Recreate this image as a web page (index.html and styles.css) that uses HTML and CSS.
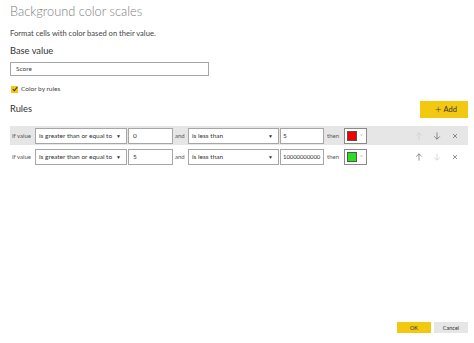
FILE: index.html
```html
<!DOCTYPE html>
<html>
<head>
<meta charset="utf-8">
<link rel="stylesheet" href="styles.css">
</head>
<body>
<div class="dialog">
  <h1 class="title">Background color scales</h1>
  <p class="subtitle">Format cells with color based on their value.</p>
  <h2 class="section">Base value</h2>
  <div class="field">Score</div>
  <label class="check"><span class="box"><svg viewBox="0 0 8 8" width="6" height="6"><path d="M1 4.2 L3.2 6.3 L7 1.6" fill="none" stroke="#333" stroke-width="1.4"/></svg></span>Color by rules</label>
  <div class="rules-head">
    <h2 class="section rules-title">Rules</h2>
    <button class="add"><span class="plus">+</span>Add</button>
  </div>
  <div class="rules">
    <div class="rule active">
      <span class="lbl">If value</span>
      <div class="sel s1"><span>is greater than or equal to</span><span class="caret">▼</span></div>
      <div class="inp i1">0</div>
      <span class="lbl and">and</span>
      <div class="sel s2"><span>is less than</span><span class="caret">▼</span></div>
      <div class="inp i2">5</div>
      <span class="lbl then">then</span>
      <div class="color"><span class="sw red"></span><span class="chev">˅</span></div>
      <div class="acts">
        <svg class="act dim" viewBox="0 0 10 10"><path d="M5 9.5V1 M1.5 4.5L5 1L8.5 4.5" fill="none" stroke="currentColor" stroke-width="0.8"/></svg>
        <svg class="act" viewBox="0 0 10 10"><path d="M5 0.5V9 M1.5 5.5L5 9L8.5 5.5" fill="none" stroke="currentColor" stroke-width="0.8"/></svg>
        <svg class="act" viewBox="0 0 10 10"><path d="M2.5 2.5L7.5 7.5 M7.5 2.5L2.5 7.5" fill="none" stroke="currentColor" stroke-width="0.8"/></svg>
      </div>
    </div>
    <div class="rule">
      <span class="lbl">If value</span>
      <div class="sel s1"><span>is greater than or equal to</span><span class="caret">▼</span></div>
      <div class="inp i1">5</div>
      <span class="lbl and">and</span>
      <div class="sel s2"><span>is less than</span><span class="caret">▼</span></div>
      <div class="inp i2 long">10000000000</div>
      <span class="lbl then">then</span>
      <div class="color"><span class="sw green"></span><span class="chev">˅</span></div>
      <div class="acts">
        <svg class="act" viewBox="0 0 10 10"><path d="M5 9.5V1 M1.5 4.5L5 1L8.5 4.5" fill="none" stroke="currentColor" stroke-width="0.8"/></svg>
        <svg class="act dim" viewBox="0 0 10 10"><path d="M5 0.5V9 M1.5 5.5L5 9L8.5 5.5" fill="none" stroke="currentColor" stroke-width="0.8"/></svg>
        <svg class="act" viewBox="0 0 10 10"><path d="M2.5 2.5L7.5 7.5 M7.5 2.5L2.5 7.5" fill="none" stroke="currentColor" stroke-width="0.8"/></svg>
      </div>
    </div>
  </div>
  <div class="spacer"></div>
  <div class="footer">
    <button class="btn ok">OK</button>
    <button class="btn cancel">Cancel</button>
  </div>
</div>
</body>
</html>
```

FILE: styles.css
```css
* { box-sizing: border-box; }
html, body { margin: 0; padding: 0; background: #fff; }
body { font-family: "Lato", "Open Sans", sans-serif; color: #333; width: 474px; height: 343px; overflow: hidden; }
.dialog { display: flex; flex-direction: column; height: 343px; padding: 0 6px 10px 10px; }
.title { margin: 0; padding-top: 1px; font-size: 12.8px; font-weight: 300; color: #7d7d7d; line-height: 20px; height: 21px; }
.subtitle { margin: 7px 0 0; font-size: 7.6px; line-height: 10px; color: #444; }
.section { margin: 7px 0 0; font-size: 9.3px; font-weight: 400; line-height: 12px; color: #333; }
.field { margin-top: 5px; width: 199px; height: 14px; border: 1px solid #a6a6a6; font-size: 6.5px; line-height: 12px; padding-left: 5px; color: #444; }
.check { display: flex; align-items: center; margin-top: 9px; font-size: 6.5px; line-height: 8px; color: #444; }
.box { width: 7px; height: 7px; background: #f2c811; margin: 0 3px 0 1px; display: flex; align-items: center; justify-content: center; }
.rules-head { display: flex; justify-content: space-between; align-items: flex-start; margin-top: 6px; }
.rules-title { margin-top: 4px; }
.add { margin-top: 2px; width: 48px; height: 17px; border: 0; background: #f2c811; font-family: inherit; font-size: 7.5px; color: #333; padding: 0 0 0 4px; display: flex; align-items: center; justify-content: center; gap: 2px; }
.plus { font-size: 11px; font-weight: 300; line-height: 10px; margin-top: -1px; }
.rules { margin-top: 8px; display: flex; flex-direction: column; gap: 2px; width: 458px; }
.rule { display: flex; align-items: center; height: 19px; padding-left: 2px; }
.rule.active { background: #e6e6e6; }
.lbl { font-size: 6px; color: #555; width: 23px; white-space: nowrap; }
.sel, .inp, .color { height: 16px; background: #fff; border: 1px solid #a6a6a6; font-size: 6.5px; line-height: 14px; color: #333; }
.sel { display: flex; justify-content: space-between; padding: 0 5px 0 3px; white-space: nowrap; }
.s1 { width: 92px; }
.s2 { width: 91px; }
.caret { font-size: 5px; color: #333; }
.inp { padding-left: 4px; margin-left: 1px; }
.i1 { width: 45px; }
.i2 { width: 44px; padding-left: 2px; }
.long { font-size: 6px; letter-spacing: -0.1px; overflow: hidden; white-space: nowrap; }
.and { width: 13px; margin-left: 2px; }
.then { width: 17px; margin-left: 3px; }
.color { width: 23px; display: flex; align-items: center; padding-left: 2px; border-color: #8a8a8a; }
.sw { width: 10px; height: 10px; border: 1px solid #555; }
.red { background: #f00000; }
.green { background: #28e020; }
.chev { font-size: 6px; color: #aaa; margin-left: 3px; }
.acts { display: flex; gap: 10px; margin-left: 48px; }
.act { width: 8px; height: 8px; color: #555; }
.act.dim { color: #c8c8c8; }
.spacer { flex: 1; }
.footer { display: flex; justify-content: flex-end; gap: 3px; }
.btn { height: 11px; border: 0; font-family: inherit; font-size: 5.5px; padding: 0; color: #333; }
.ok { width: 34px; background: #f2c811; }
.cancel { width: 34px; background: #e6e6e6; }
```
